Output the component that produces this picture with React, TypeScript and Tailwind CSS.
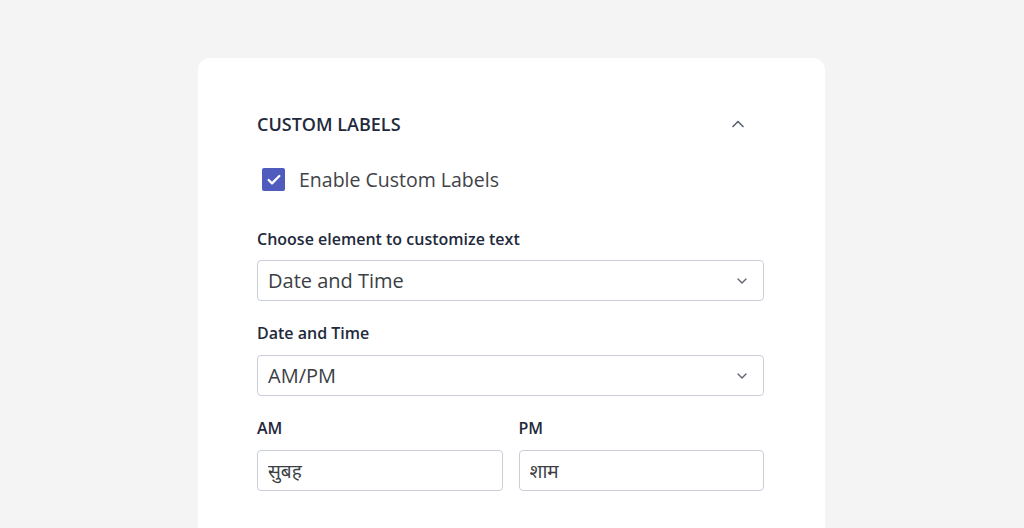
import { ChevronDown, ChevronUp, Check } from 'lucide-react'

function SelectBox({ value }: { value: string }) {
  return (
    <div className="flex h-[41px] items-center justify-between rounded border border-[#c9ced8] bg-white pl-[10px] pr-[13px]">
      <span className="text-[20px] text-[#3b3f44]">{value}</span>
      <ChevronDown className="h-4 w-4 text-[#5b6270]" strokeWidth={2} />
    </div>
  )
}

function FieldLabel({ children }: { children: string }) {
  return <p className="text-[16px] font-semibold leading-6 text-[#1f2a3c]">{children}</p>
}

export default function App() {
  return (
    <div
      className="min-h-screen bg-[#f4f4f4] pt-[58px]"
      style={{ fontFamily: '"Open Sans", "Noto Sans", sans-serif' }}
    >
      <div className="ml-[198px] w-[627px] rounded-xl bg-white pl-[59px] pr-[61px] pt-[54px] pb-16">
        <div className="flex h-6 items-center justify-between">
          <h2 className="text-[18px] font-semibold text-[#1f2a3c]">CUSTOM LABELS</h2>
          <ChevronUp className="mr-[16px] h-5 w-5 text-[#5b6270]" strokeWidth={2} />
        </div>

        <label className="mt-[29px] flex items-center gap-[14px] pl-[5px]">
          <span className="flex h-[23px] w-[23px] items-center justify-center rounded-[2px] bg-[#4f5bbd]">
            <Check className="h-4 w-4 text-white" strokeWidth={3.5} />
          </span>
          <span className="text-[19.5px] text-[#3f4347]">Enable Custom Labels</span>
        </label>

        <div className="mt-[33px]">
          <FieldLabel>Choose element to customize text</FieldLabel>
          <div className="mt-[9px]">
            <SelectBox value="Date and Time" />
          </div>
        </div>

        <div className="mt-5">
          <FieldLabel>Date and Time</FieldLabel>
          <div className="mt-[10px]">
            <SelectBox value="AM/PM" />
          </div>
        </div>

        <div className="mt-5 grid grid-cols-2 gap-4">
          <div>
            <FieldLabel>AM</FieldLabel>
            <input
              defaultValue="सुबह"
              className="mt-[10px] h-[41px] w-full rounded border border-[#c9ced8] px-[10px] text-[19px] text-[#3b3f44] outline-none"
            />
          </div>
          <div>
            <FieldLabel>PM</FieldLabel>
            <input
              defaultValue="शाम"
              className="mt-[10px] h-[41px] w-full rounded border border-[#c9ced8] px-[10px] text-[19px] text-[#3b3f44] outline-none"
            />
          </div>
        </div>
      </div>
    </div>
  )
}
